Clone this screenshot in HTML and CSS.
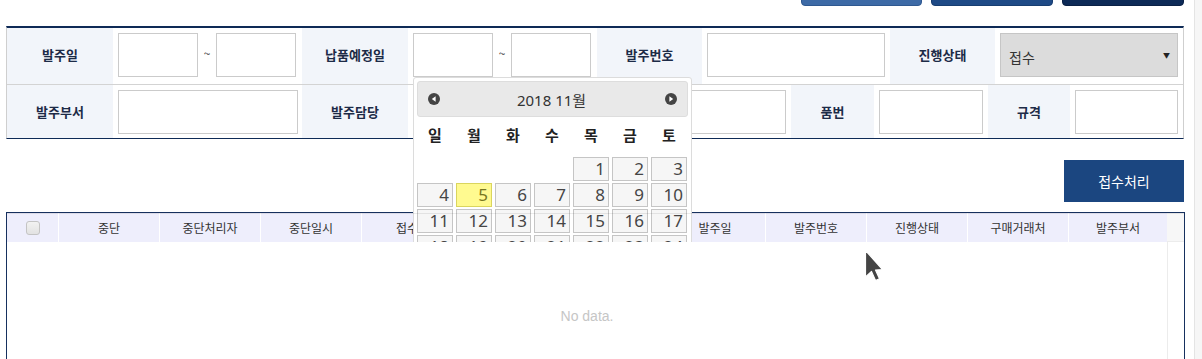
FILE: index.html
```html
<!DOCTYPE html>
<html lang="ko">
<head>
 <meta charset="UTF-8">
 <meta name="viewport" content="width=device-width, initial-scale=1.0">
 <title>발주 접수</title>
 <link rel="stylesheet" href="styles.css">
</head>
<body>
 <div class="page">
   <div class="top-actions">
     <div class="top-btn btn-light"></div>
     <div class="top-btn btn-mid"></div>
     <div class="top-btn btn-dark"></div>
   </div>

   <div class="search">
     <div class="search-row row-a">
       <div class="label">발주일</div>
       <div class="field">
         <input class="input short" type="text">
         <span class="tilde">~</span>
         <input class="input short" type="text">
       </div>
       <div class="label">납품예정일</div>
       <div class="field">
         <div class="date-wrap">
           <input class="input short" type="text">
           <div class="datepicker">
             <div class="dp-head">
               <span class="dp-nav"><svg width="12" height="12" viewBox="0 0 12 12"><circle cx="6" cy="6" r="6" fill="#444"/><path d="M7.6 3.2 L3.8 6 L7.6 8.8 Z" fill="#fff"/></svg></span>
               <span class="dp-title">2018 11월</span>
               <span class="dp-nav"><svg width="12" height="12" viewBox="0 0 12 12"><circle cx="6" cy="6" r="6" fill="#444"/><path d="M4.4 3.2 L8.2 6 L4.4 8.8 Z" fill="#fff"/></svg></span>
             </div>
             <div class="dp-week">
               <span>일</span><span>월</span><span>화</span><span>수</span><span>목</span><span>금</span><span>토</span>
             </div>
             <div class="dp-days">
               <span class="empty"></span><span class="empty"></span><span class="empty"></span><span class="empty"></span>
               <span class="day">1</span><span class="day">2</span><span class="day">3</span>
               <span class="day">4</span><span class="day today">5</span><span class="day">6</span><span class="day">7</span><span class="day">8</span><span class="day">9</span><span class="day">10</span>
               <span class="day">11</span><span class="day">12</span><span class="day">13</span><span class="day">14</span><span class="day">15</span><span class="day">16</span><span class="day">17</span>
               <span class="day">18</span><span class="day">19</span><span class="day">20</span><span class="day">21</span><span class="day">22</span><span class="day">23</span><span class="day">24</span>
               <span class="day">25</span><span class="day">26</span><span class="day">27</span><span class="day">28</span><span class="day">29</span><span class="day">30</span>
             </div>
           </div>
         </div>
         <span class="tilde">~</span>
         <input class="input short" type="text">
       </div>
       <div class="label">발주번호</div>
       <div class="field"><input class="input fill" type="text"></div>
       <div class="label">진행상태</div>
       <div class="field">
         <div class="select">접수<span class="caret">▼</span></div>
       </div>
     </div>
     <div class="search-row row-b">
       <div class="label">발주부서</div>
       <div class="field"><input class="input dept" type="text"></div>
       <div class="label">발주담당</div>
       <div class="field"><input class="input fill" type="text"></div>
       <div class="label">품번</div>
       <div class="field"><input class="input fill" type="text"></div>
       <div class="label">규격</div>
       <div class="field"><input class="input fill" type="text"></div>
     </div>
   </div>

   <div class="actions">
     <div class="button">접수처리</div>
   </div>

   <div class="grid">
     <div class="grid-head">
       <div class="th"><span class="check"></span></div>
       <div class="th">중단</div>
       <div class="th">중단처리자</div>
       <div class="th">중단일시</div>
       <div class="th"><span class="cut">접수</span></div>
       <div class="th"></div>
       <div class="th"></div>
       <div class="th">발주일</div>
       <div class="th">발주번호</div>
       <div class="th">진행상태</div>
       <div class="th">구매거래처</div>
       <div class="th last">발주부서</div>
       <div class="th gutter"></div>
     </div>
     <div class="grid-body">
       <div class="no-data">No data.</div>
       <div class="body-gutter"></div>
     </div>
   </div>
 </div>
 <div class="scroll-track"></div>

 <svg class="cursor" width="20" height="34" viewBox="0 0 20 34">
   <path d="M1.5 1.5 L1.5 28 L7.5 22.5 L11.5 31.5 L15.5 29.8 L11.5 21 L18.5 20.5 Z" fill="#444" stroke="#fff" stroke-width="1.2" stroke-linejoin="round"/>
 </svg>
</body>
</html>
```

FILE: styles.css
```css
 body {
   margin: 0;
   display: flex;
   font-family: "Noto Sans CJK KR", "Noto Sans", sans-serif;
   color: #333;
   background: #fff;
   overflow: hidden;
 }
 .page {
   width: 1194px;
   padding: 0 9px 0 6px;
   box-sizing: border-box;
 }
 .scroll-track {
   width: 8px;
   height: 359px;
   border-left: 1px solid #e4e4e4;
   background: #f6f6f6;
   box-sizing: border-box;
 }

 /* top buttons, mostly scrolled away */
 .top-actions {
   height: 6px;
   overflow: hidden;
   display: flex;
   align-items: flex-end;
   justify-content: flex-end;
   gap: 9px;
   padding-right: 1px;
 }
 .top-btn {
   flex-shrink: 0;
   width: 122px;
   height: 36px;
   border-radius: 4px;
   box-sizing: border-box;
 }
 .btn-light {
   width: 121px;
   background: #3d6aa6;
   border: 1px solid #2f5890;
 }
 .btn-mid {
   background: #1e4a86;
   border: 1px solid #173d70;
 }
 .btn-dark {
   background: #0d2a57;
   border: 1px solid #0a2045;
 }

 /* search box */
 .search {
   width: 1178px;
   margin-top: 20px;
   border-top: 2px solid #0e2a56;
   border-bottom: 1px solid #0e2a56;
   border-left: 1px solid #cfcfcf;
   border-right: 1px solid #cfcfcf;
   box-sizing: border-box;
 }
 .search-row {
   display: grid;
 }
 .row-a {
   grid-template-columns: 106px 189px 106px 189px 105px 188px 105px 188px;
   height: 57px;
   border-bottom: 1px solid #d3d3d3;
   box-sizing: border-box;
 }
 .row-b {
   grid-template-columns: 106px 189px 106px 383px 83px 114px 82px 113px;
   height: 53px;
 }
 .label {
   display: flex;
   align-items: center;
   justify-content: center;
   background: #f2f5fa;
   font-size: 13px;
   font-weight: bold;
   color: #1d2b47;
 }
 .row-a .label {
   padding-bottom: 3px;
 }
 .field {
   display: flex;
   align-items: flex-start;
   padding: 5px 5px 0 5px;
   background: #fff;
 }
 .input {
   height: 44px;
   margin: 0;
   border: 1px solid #cbcbcb;
   background: #fff;
   box-sizing: border-box;
   font: inherit;
 }
 .short {
   width: 80px;
 }
 .fill {
   width: 100%;
 }
 .dept {
   width: 180px;
 }
 .tilde {
   width: 18px;
   text-align: center;
   font-size: 12px;
   line-height: 40px;
   color: #444;
 }
 .select {
   position: relative;
   width: 100%;
   height: 44px;
   padding-left: 8px;
   border: 1px solid #c6c6c6;
   background: #dcdcdc;
   box-sizing: border-box;
   font-size: 14px;
   line-height: 46px;
   color: #333;
 }
 .caret {
   position: absolute;
   right: 7px;
   top: 0;
   font-size: 7px;
   line-height: 42px;
   color: #222;
 }

 /* datepicker popup */
 .date-wrap {
   position: relative;
 }
 .datepicker {
   position: absolute;
   top: 44px;
   left: 0;
   z-index: 1;
   width: 279px;
   height: 240px;
   padding: 3px;
   border: 1px solid #dcdcdc;
   border-radius: 3px;
   background: #fff;
   box-sizing: border-box;
 }
 .dp-head {
   display: flex;
   align-items: center;
   justify-content: space-between;
   height: 36px;
   padding: 0 10px;
   border: 1px solid #dddddd;
   border-radius: 3px;
   background: #e9e9e9;
   box-sizing: border-box;
 }
 .dp-nav {
   display: flex;
 }
 .dp-title {
   font-family: "Noto Sans", "Noto Sans CJK KR", sans-serif;
   font-size: 15px;
   color: #333;
   margin-right: 2px;
 }
 .dp-week {
   display: grid;
   grid-template-columns: repeat(7, 36px);
   column-gap: 3px;
   height: 34px;
   margin: 1px 0 5px 0;
   width: 270px;
 }
 .dp-week span {
   text-align: center;
   font-size: 15px;
   font-weight: bold;
   line-height: 34px;
   color: #222;
 }
 .dp-days {
   display: grid;
   grid-template-columns: repeat(7, 36px);
   grid-auto-rows: 24px;
   gap: 2px 3px;
   width: 270px;
 }
 .day {
   padding-right: 3px;
   border: 1px solid #c5c5c5;
   background: #f6f6f6;
   box-sizing: border-box;
   text-align: right;
   font-family: "Noto Sans", sans-serif;
   font-size: 17px;
   line-height: 22px;
   color: #454545;
 }
 .day.today {
   border-color: #dad55e;
   background: #fffa90;
   color: #777620;
 }

 /* actions */
 .actions {
   display: flex;
   justify-content: flex-end;
   margin-top: 21px;
   padding-right: 1px;
 }
 .button {
   width: 120px;
   height: 42px;
   background: #1b4680;
   color: #fff;
   font-size: 14px;
   line-height: 42px;
   text-align: center;
   cursor: pointer;
 }

 /* result grid */
 .grid {
   position: relative;
   margin-top: 10px;
   border: 1px solid #16305e;
 }
 .grid::before {
   content: "";
   position: absolute;
   top: 0;
   left: 0;
   right: 0;
   height: 1px;
   background: rgba(0, 0, 0, 0.08);
   z-index: 2;
 }
 .grid-head {
   display: grid;
   grid-template-columns: 52px repeat(10, 101px) 98px 17px;
   height: 29px;
 }
 .th {
   display: flex;
   align-items: center;
   justify-content: center;
   border-right: 1px solid #fff;
   background: #eeeefc;
   font-size: 12px;
   color: #333;
 }
 .th .cut {
   margin-right: 10px;
 }
 .th.last {
   border-right: none;
 }
 .th.gutter {
   border-right: none;
   border-bottom: 1px solid #ececec;
   background: #f7f7f7;
 }
 .check {
   width: 14px;
   height: 14px;
   border: 1px solid #c4c4c4;
   border-radius: 3px;
   background: linear-gradient(#f2f2f2, #e2e2e2);
   box-sizing: border-box;
 }
 .grid-body {
   position: relative;
   z-index: 2;
   display: flex;
   height: 200px;
   background: #fff;
 }
 .no-data {
   flex: 1;
   padding-top: 66px;
   text-align: center;
   font-family: "Liberation Sans", Arial, sans-serif;
   font-size: 14px;
   color: #c6c6c6;
 }
 .body-gutter {
   width: 17px;
   border-left: 1px solid #ececec;
   box-sizing: border-box;
 }

 .cursor {
   position: absolute;
   left: 864px;
   top: 249px;
   z-index: 5;
 }
```
